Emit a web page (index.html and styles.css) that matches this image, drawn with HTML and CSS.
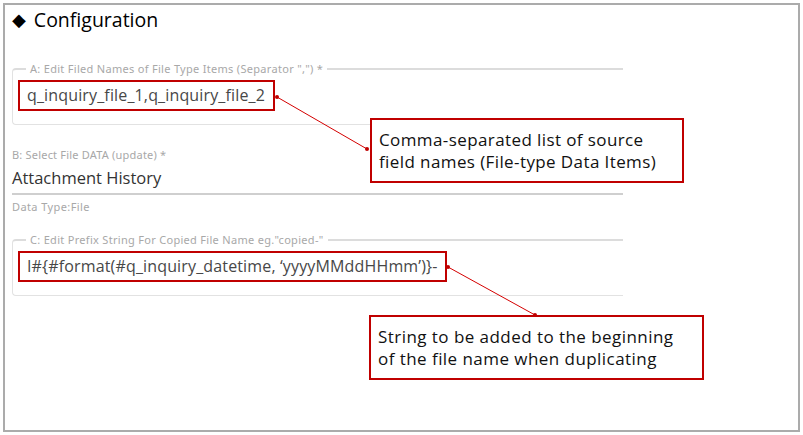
FILE: index.html
```html
<!DOCTYPE html>
<html>
<head>
<meta charset="utf-8">
<link rel="stylesheet" href="styles.css">
</head>
<body>
<div class="frame">
  <h1 class="title"><span class="diamond">◆</span><span>Configuration</span></h1>
  <div class="form">
    <fieldset class="group group-a">
      <legend>A: Edit Filed Names of File Type Items (Separator ",") *</legend>
      <div class="value hl">q_inquiry_file_1,q_inquiry_file_2</div>
    </fieldset>
    <div class="select-block">
      <div class="label">B: Select File DATA (update) *</div>
      <div class="select-value">Attachment History</div>
      <div class="note">Data Type:File</div>
    </div>
    <fieldset class="group group-c">
      <legend>C: Edit Prefix String For Copied File Name eg."copied-"</legend>
      <div class="value hl">I#{#format(#q_inquiry_datetime, ‘yyyyMMddHHmm’)}-</div>
    </fieldset>
  </div>

  <svg class="connectors" width="797" height="429" viewBox="3 3 797 429">
    <line x1="277" y1="97" x2="367" y2="149" />
    <circle cx="277" cy="97" r="2" />
    <circle cx="367" cy="149" r="2" />
    <line x1="448" y1="267" x2="535" y2="315" />
    <circle cx="448" cy="267" r="2" />
    <circle cx="535" cy="315" r="2" />
  </svg>

  <div class="callout callout-1">Comma-separated list of source<br>field names (File-type Data Items)</div>
  <div class="callout callout-2">String to be added to the beginning<br>of the file name when duplicating</div>
</div>
</body>
</html>
```

FILE: styles.css
```css
html, body {
  margin: 0;
  padding: 0;
  background: #fff;
}

.frame {
  position: relative;
  box-sizing: border-box;
  margin: 3px;
  width: 797px;
  height: 429px;
  border: 2px solid #ababab;
  background: #fff;
  font-family: "Open Sans", "Liberation Sans", sans-serif;
}

.title {
  display: flex;
  align-items: center;
  gap: 8px;
  margin: 3px 0 0 7px;
  font-size: 19.5px;
  line-height: 24px;
  font-weight: normal;
  color: #000;
}

.diamond {
  font-family: "DejaVu Sans", sans-serif;
  font-size: 18px;
}

.form {
  width: 611px;
  margin: 31px 0 0 7px;
}

.group {
  margin: 0;
  padding: 5px 8px 13px 5px;
  border: none;
  border-top: 2px solid #dcdcdc;
  border-left: 1px solid #e2e2e2;
  border-bottom: 1px solid #e2e2e2;
  border-radius: 4px 0 0 4px;
}

.group legend {
  margin-left: 8px;
  padding: 0 4px 0 4px;
  font-family: "Noto Sans", sans-serif;
  font-size: 11px;
  line-height: 12px;
  letter-spacing: 0.3px;
  color: #a8a8a8;
}

.value {
  font-size: 16px;
  line-height: 19px;
  letter-spacing: 0.15px;
  color: #474747;
}

.hl {
  display: inline-block;
  padding: 4px 8px 4px 7px;
  border: 2px solid #c00000;
}

.select-block {
  margin-top: 24px;
}

.label {
  font-family: "Noto Sans", sans-serif;
  font-size: 11px;
  line-height: 12px;
  letter-spacing: 0.2px;
  color: #a8a8a8;
}

.select-value {
  margin-top: 6px;
  padding-bottom: 4px;
  font-size: 16.5px;
  line-height: 22px;
  color: #333;
  border-bottom: 2px solid #cfcfcf;
}

.note {
  margin-top: 6px;
  font-family: "Noto Sans", sans-serif;
  font-size: 11px;
  line-height: 12px;
  letter-spacing: 0.4px;
  color: #a8a8a8;
}

.group-c {
  margin-top: 21px;
}

.connectors {
  position: absolute;
  left: -2px;
  top: -2px;
  pointer-events: none;
}

.connectors line {
  stroke: #d40000;
  stroke-width: 1;
}

.connectors circle {
  fill: #c00000;
}

.callout {
  position: absolute;
  box-sizing: border-box;
  border: 2px solid #c00000;
  background: #fff;
  padding: 9px 7px;
  font-size: 17px;
  line-height: 22px;
  color: #111;
}

.callout-1 {
  left: 365px;
  top: 113px;
  width: 314px;
  height: 65px;
  letter-spacing: 0.4px;
}

.callout-2 {
  left: 364px;
  top: 310px;
  width: 335px;
  height: 65px;
  letter-spacing: 0.45px;
}
```
